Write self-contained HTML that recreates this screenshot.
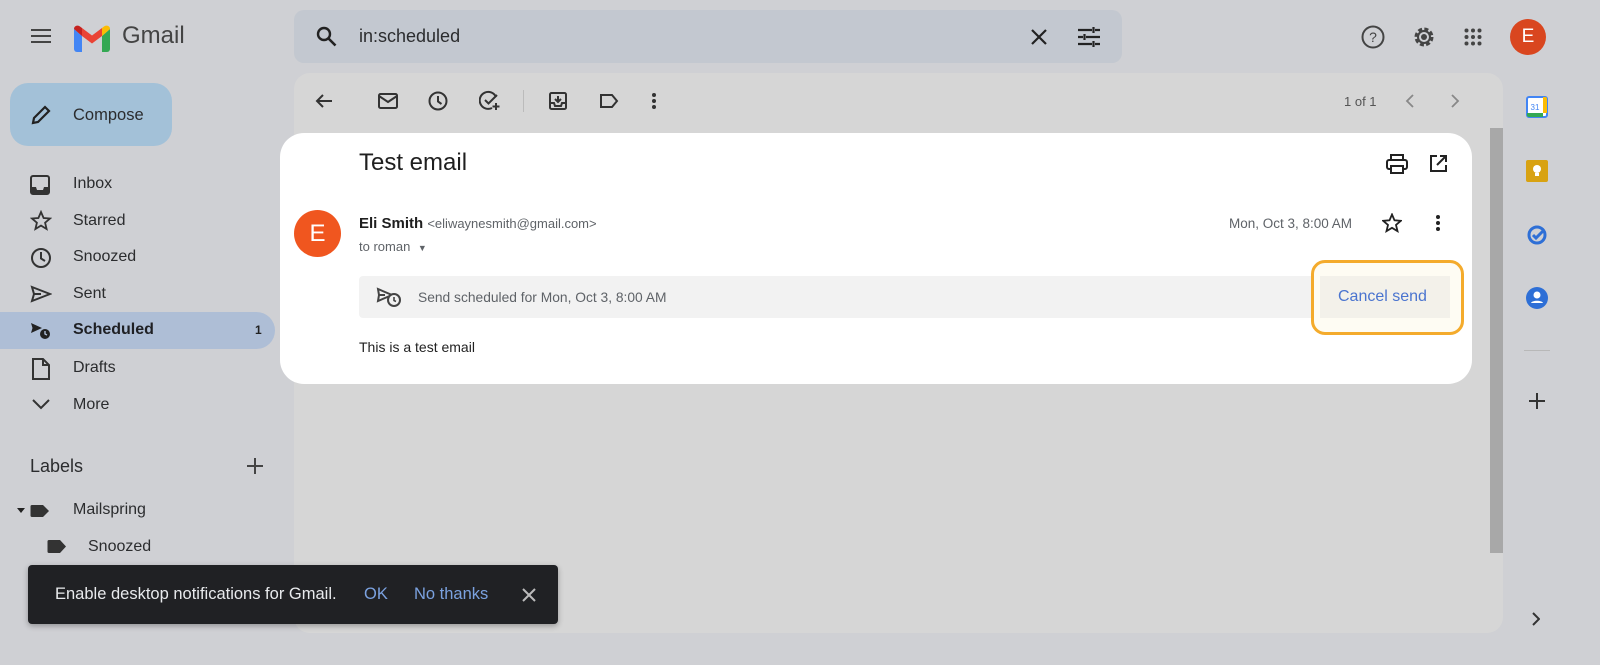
<!DOCTYPE html>
<html><head><meta charset="utf-8"><style>
*{box-sizing:border-box;margin:0;padding:0}
body{width:1600px;height:665px;background:#cfd0d4;font-family:"Liberation Sans",sans-serif;position:relative;overflow:hidden;color:#202124}
.a{position:absolute}
svg{position:absolute}
.nav{position:absolute;left:73px;font-size:16px;color:#2b2c2e}
.ic{position:absolute;left:30px}
</style></head><body>
<svg style="left:30px;top:27px" width="22" height="18" viewBox="0 0 22 18"><path d="M1 3h20M1 9h20M1 15h20" stroke="#444" stroke-width="2"/></svg>
<svg style="left:74px;top:25px" width="36" height="27" viewBox="0 0 36 27"><path d="M0 4v20a3 3 0 0 0 3 3h5V11z" fill="#4285f4"/><path d="M28 27h5a3 3 0 0 0 3-3V4l-8 7z" fill="#34a853"/><path d="M8 11L18 18.5 28 11V3L18 10.5 8 3z" fill="#ea4335"/><path d="M0 4l8 7V3L6 1.5C3.5-.3 0 1 0 4z" fill="#c5221f"/><path d="M28 3v8l8-7c0-3-3.5-4.3-6-2.5z" fill="#fbbc04"/></svg>
<div class="a" style="left:122px;top:22px;font-size:24px;color:#444">Gmail</div>
<div class="a" style="left:294px;top:10px;width:828px;height:53px;background:#c3c8d0;border-radius:10px"></div>
<svg style="left:316px;top:26px" width="22" height="22" viewBox="0 0 22 22"><circle cx="8" cy="8" r="6" fill="none" stroke="#222" stroke-width="2.4"/><path d="M12.5 12.5l7 7" stroke="#222" stroke-width="2.6"/></svg>
<div class="a" style="left:359px;top:26px;font-size:18px;color:#2b2c2e">in:scheduled</div>
<svg style="left:1030px;top:28px" width="18" height="18"><path d="M2 2l14 14M16 2L2 16" stroke="#222" stroke-width="2.2"/></svg>
<svg style="left:1078px;top:27px" width="22" height="20"><path d="M0 3h14M17 3h5M0 10h5M8 10h14M0 17h14M17 17h5M15.5 0v6M6.5 7v6M15.5 14v6" stroke="#222" stroke-width="2.2"/></svg>
<svg style="left:1361px;top:25px" width="24" height="24"><circle cx="12" cy="12" r="10.5" fill="none" stroke="#444" stroke-width="2"/><text x="12" y="17" font-size="14" text-anchor="middle" fill="#444" font-family="Liberation Sans">?</text></svg>
<svg style="left:1411px;top:24px" width="26" height="26" viewBox="0 0 26 26"><circle cx="13" cy="13" r="8" fill="none" stroke="#444" stroke-width="3" stroke-dasharray="4 2.3"/><circle cx="13" cy="13" r="6" fill="none" stroke="#444" stroke-width="2"/><circle cx="13" cy="13" r="3" fill="#444"/></svg>
<svg style="left:1464px;top:28px" width="18" height="18"><g fill="#444"><circle cx="2.5" cy="2.5" r="2"/><circle cx="9" cy="2.5" r="2"/><circle cx="15.5" cy="2.5" r="2"/><circle cx="2.5" cy="9" r="2"/><circle cx="9" cy="9" r="2"/><circle cx="15.5" cy="9" r="2"/><circle cx="2.5" cy="15.5" r="2"/><circle cx="9" cy="15.5" r="2"/><circle cx="15.5" cy="15.5" r="2"/></g></svg>
<div class="a" style="left:1510px;top:19px;width:36px;height:36px;border-radius:50%;background:#d9461f;color:#fff;font-size:19px;text-align:center;line-height:36px">E</div>
<div class="a" style="left:10px;top:83px;width:162px;height:63px;background:#a3c1d8;border-radius:18px"></div>
<svg style="left:30px;top:104px" width="22" height="22"><path d="M3 19l1-5L15 3l4 4L8 18z" fill="none" stroke="#222" stroke-width="2.2"/></svg>
<div class="a" style="left:73px;top:106px;font-size:16.5px;color:#2b2c2e">Compose</div>
<div class="a" style="left:0;top:312px;width:275px;height:37px;background:#aebed6;border-radius:0 19px 19px 0"></div>
<svg class="ic" style="top:175px" width="20" height="20"><rect x="1" y="1" width="18" height="18" rx="2" fill="none" stroke="#333" stroke-width="2"/><path d="M1 12h5l1 3h6l1-3h5v7H1z" fill="#333"/></svg>
<div class="nav" style="top:175px">Inbox</div>
<svg class="ic" style="top:210px" width="22" height="22"><path d="M11 2l2.6 6 6.4.5-4.9 4.2 1.5 6.3L11 15.6 5.4 19l1.5-6.3L2 8.5 8.4 8z" fill="none" stroke="#333" stroke-width="1.8"/></svg>
<div class="nav" style="top:212px">Starred</div>
<svg class="ic" style="top:247px" width="22" height="22"><circle cx="11" cy="11" r="9" fill="none" stroke="#333" stroke-width="2"/><path d="M11 5v6.5l4 2.5" fill="none" stroke="#333" stroke-width="2"/></svg>
<div class="nav" style="top:248px">Snoozed</div>
<svg class="ic" style="top:285px" width="22" height="18"><path d="M2 2l18 7-18 7 2-7z M4 9h7" fill="none" stroke="#333" stroke-width="2"/></svg>
<div class="nav" style="top:285px">Sent</div>
<svg class="ic" style="top:321px" width="22" height="20"><path d="M1 2l11 5-11 5 1.5-5z" fill="#222"/><circle cx="15" cy="13" r="5" fill="#222"/><path d="M15 10v3l2 1" stroke="#aebed6" stroke-width="1.4" fill="none"/></svg>
<div class="nav" style="top:321px;font-weight:bold;color:#1f2024">Scheduled</div>
<div class="a" style="left:255px;top:323px;font-size:12px;font-weight:bold;color:#222">1</div>
<svg class="ic" style="top:358px;left:32px" width="18" height="22"><path d="M1 1h10l6 6v14H1z M11 1v6h6" fill="none" stroke="#333" stroke-width="2"/></svg>
<div class="nav" style="top:359px">Drafts</div>
<svg class="ic" style="top:398px;left:32px" width="18" height="12"><path d="M1 2l8 8 8-8" fill="none" stroke="#333" stroke-width="2"/></svg>
<div class="nav" style="top:396px">More</div>
<div class="a" style="left:30px;top:456px;font-size:18px;color:#2b2c2e">Labels</div>
<svg style="left:246px;top:457px" width="18" height="18"><path d="M9 1v16M1 9h16" stroke="#444" stroke-width="2"/></svg>
<svg style="left:16px;top:505px" width="36" height="12"><path d="M1 3h8l-4 5z" fill="#222"/><path d="M16 0h11l6 6-6 6H16a1.5 1.5 0 0 1-1.5-1.5v-9A1.5 1.5 0 0 1 16 0z" fill="#333"/></svg>
<div class="nav" style="top:501px">Mailspring</div>
<svg style="left:47px;top:540px" width="20" height="13"><path d="M2 0h11l6 6.5-6 6.5H2a1.5 1.5 0 0 1-1.5-1.5v-10A1.5 1.5 0 0 1 2 0z" fill="#333"/></svg>
<div class="nav" style="top:538px;left:88px">Snoozed</div>
<div class="a" style="left:294px;top:73px;width:1209px;height:560px;background:#d6d6d6;border-radius:16px"></div>
<div class="a" style="left:1490px;top:128px;width:13px;height:425px;background:#a8a8a8"></div>
<svg style="left:315px;top:93px" width="18" height="16"><path d="M17 8H2M8 2L2 8l6 6" fill="none" stroke="#333" stroke-width="2"/></svg>
<svg style="left:378px;top:93px" width="20" height="16"><rect x="1" y="1" width="18" height="14" rx="1.5" fill="none" stroke="#333" stroke-width="2"/><path d="M1 3l9 6 9-6" fill="none" stroke="#333" stroke-width="2"/></svg>
<svg style="left:428px;top:91px" width="20" height="20"><circle cx="10" cy="10" r="8.5" fill="none" stroke="#333" stroke-width="2"/><path d="M10 5v5.5l3.5 2.5" fill="none" stroke="#333" stroke-width="2"/></svg>
<svg style="left:479px;top:90px" width="22" height="22"><path d="M17 7a8.5 8.5 0 1 0-4 11" fill="none" stroke="#333" stroke-width="2"/><path d="M6 10l3.5 3.5L18 5M17 13v7M13.5 16.5h7" fill="none" stroke="#333" stroke-width="2"/></svg>
<div class="a" style="left:523px;top:90px;width:1px;height:22px;background:#bbb"></div>
<svg style="left:549px;top:92px" width="18" height="18"><rect x="1" y="1" width="16" height="16" rx="1.5" fill="none" stroke="#333" stroke-width="2"/><path d="M1 11h4l1 3h6l1-3h4M9 4v6M6 7l3 3 3-3" fill="none" stroke="#333" stroke-width="2"/></svg>
<svg style="left:599px;top:94px" width="20" height="14"><path d="M2 1h11l5 6-5 6H2z" fill="none" stroke="#333" stroke-width="2"/></svg>
<svg style="left:650px;top:92px" width="8" height="18"><g fill="#333"><circle cx="4" cy="3" r="2"/><circle cx="4" cy="9" r="2"/><circle cx="4" cy="15" r="2"/></g></svg>
<div class="a" style="left:1344px;top:94px;font-size:13px;color:#555">1 of 1</div>
<svg style="left:1405px;top:94px" width="10" height="14"><path d="M8 1L2 7l6 6" fill="none" stroke="#888" stroke-width="1.8"/></svg>
<svg style="left:1450px;top:94px" width="10" height="14"><path d="M2 1l6 6-6 6" fill="none" stroke="#888" stroke-width="1.8"/></svg>
<div class="a" style="left:280px;top:133px;width:1192px;height:251px;background:#fff;border-radius:24px"></div>
<div class="a" style="left:359px;top:149px;font-size:24px;color:#1f1f1f">Test email</div>
<svg style="left:1386px;top:154px" width="22" height="20"><path d="M5 6V1h12v5" fill="none" stroke="#222" stroke-width="2"/><rect x="1" y="6" width="20" height="9" rx="2" fill="none" stroke="#222" stroke-width="2"/><rect x="5" y="12" width="12" height="7" fill="#fff" stroke="#222" stroke-width="2"/></svg>
<svg style="left:1429px;top:154px" width="19" height="19"><path d="M8 2H2v15h15v-6M11 2h6v6M17 2L8 11" fill="none" stroke="#222" stroke-width="2"/></svg>
<div class="a" style="left:294px;top:210px;width:47px;height:47px;border-radius:50%;background:#f0561f;color:#fff;font-size:24px;text-align:center;line-height:47px">E</div>
<div class="a" style="left:359px;top:215px;font-size:15px;font-weight:bold;color:#1f1f1f">Eli Smith <span style="font-weight:normal;font-size:13px;color:#5f6368">&lt;eliwaynesmith@gmail.com&gt;</span></div>
<div class="a" style="left:359px;top:239px;font-size:13px;color:#5f6368">to roman <span style="font-size:9px;margin-left:4px">▼</span></div>
<div class="a" style="left:1229px;top:216px;font-size:13.5px;color:#5f6368">Mon, Oct 3, 8:00 AM</div>
<svg style="left:1382px;top:213px" width="20" height="20"><path d="M10 1.5l2.5 5.8 6.3.5-4.8 4.1 1.5 6.2L10 14.8l-5.5 3.3L6 11.9 1.2 7.8l6.3-.5z" fill="none" stroke="#222" stroke-width="1.8"/></svg>
<svg style="left:1434px;top:214px" width="8" height="18"><g fill="#222"><circle cx="4" cy="3" r="2"/><circle cx="4" cy="9" r="2"/><circle cx="4" cy="15" r="2"/></g></svg>
<div class="a" style="left:359px;top:276px;width:1090px;height:42px;background:#f2f2f2;border-radius:4px"></div>
<svg style="left:376px;top:287px" width="26" height="22"><path d="M2 2l14 6-14 6 1-6zM3 8h6" fill="none" stroke="#444" stroke-width="2"/><circle cx="18" cy="13" r="6" fill="#f2f2f2" stroke="#444" stroke-width="2"/><path d="M18 10v3.5l2 1" fill="none" stroke="#444" stroke-width="1.6"/></svg>
<div class="a" style="left:418px;top:290px;font-size:13.8px;color:#5f6368">Send scheduled for Mon, Oct 3, 8:00 AM</div>
<div class="a" style="left:1311px;top:260px;width:153px;height:75px;border:3px solid #f4ab2c;border-radius:14px;background:#fefcf3"></div>
<div class="a" style="left:1320px;top:276px;width:130px;height:42px;background:#f3f1ea"></div>
<div class="a" style="left:1338px;top:288px;font-size:16px;color:#4a74cf">Cancel send</div>
<div class="a" style="left:359px;top:339px;font-size:14px;color:#222">This is a test email</div>
<svg style="left:1526px;top:96px" width="22" height="22"><rect x="1" y="1" width="20" height="20" rx="2" fill="#fff" stroke="#4285f4" stroke-width="2"/><path d="M1 17h16v4H3a2 2 0 0 1-2-2z" fill="#34a853"/><path d="M17 1h2a2 2 0 0 1 2 2v14h-4z" fill="#fbbc04"/><text x="9" y="14" font-size="8" fill="#4285f4" text-anchor="middle" font-family="Liberation Sans">31</text></svg>
<div class="a" style="left:1526px;top:160px;width:22px;height:22px;background:#d8a212;border-radius:2px"></div>
<svg style="left:1531px;top:164px" width="12" height="14"><circle cx="6" cy="5" r="4" fill="#fff"/><rect x="4" y="9" width="4" height="3" fill="#fff"/></svg>
<svg style="left:1526px;top:224px" width="22" height="22"><circle cx="11" cy="11" r="8" fill="none" stroke="#2e6fd6" stroke-width="3"/><path d="M7 11l3 3 8-8" fill="none" stroke="#2e6fd6" stroke-width="3"/></svg>
<svg style="left:1526px;top:287px" width="22" height="22"><circle cx="11" cy="11" r="11" fill="#2e6fd6"/><circle cx="11" cy="8" r="3.5" fill="#fff"/><path d="M5 16c1-3 11-3 12 0z" fill="#fff"/></svg>
<div class="a" style="left:1524px;top:350px;width:26px;height:1px;background:#b8b8b8"></div>
<svg style="left:1529px;top:393px" width="16" height="16"><path d="M8 0v16M0 8h16" stroke="#333" stroke-width="2"/></svg>
<svg style="left:1532px;top:612px" width="8" height="14"><path d="M1 1l6 6-6 6" fill="none" stroke="#333" stroke-width="2"/></svg>
<div class="a" style="left:28px;top:565px;width:530px;height:59px;background:#202124;border-radius:4px;box-shadow:0 2px 6px rgba(0,0,0,.3)"></div>
<div class="a" style="left:55px;top:585px;font-size:16.5px;color:#e8eaed">Enable desktop notifications for Gmail.</div>
<div class="a" style="left:364px;top:585px;font-size:16.5px;color:#7ba2e0">OK</div>
<div class="a" style="left:414px;top:585px;font-size:16.5px;color:#7ba2e0">No thanks</div>
<svg style="left:522px;top:588px" width="14" height="14"><path d="M1 1l12 12M13 1L1 13" stroke="#bbb" stroke-width="2"/></svg>
</body></html>
